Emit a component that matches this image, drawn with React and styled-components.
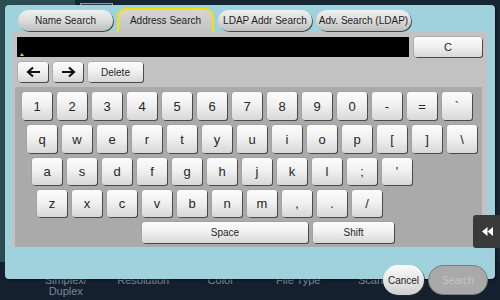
import React from "react";
import styled, { createGlobalStyle } from "styled-components";

const Global = createGlobalStyle`
  html, body { margin: 0; padding: 0; background: #14202e; }
  #root { width: 500px; height: 300px; }
  * { box-sizing: border-box; }
`;

const FONT = `"Liberation Sans", Arial, sans-serif`;

const Screen = styled.div`
  position: relative;
  width: 500px;
  height: 300px;
  overflow: hidden;
  background: #14202e;
  font-family: ${FONT};
`;

const Desktop = styled.div`
  display: grid;
  grid-template-rows: 262px 38px;
  height: 300px;
`;

const DesktopTop = styled.div`
  display: flex;
  align-items: flex-start;
  background: #172633;
`;

const TealBlock = styled.div`
  width: 75px;
  height: 100%;
  background: #2b4c52;
`;

const YellowBox = styled.div`
  margin: 3px 0 0 5px;
  width: 33px;
  height: 30px;
  border: 1px solid #b9a700;
  background: #24424a;
`;

const DeskFooter = styled.div`
  display: flex;
  padding: 13px 0 0 27px;
`;

const DeskLabel = styled.div`
  width: 77.5px;
  text-align: center;
  font-size: 11px;
  line-height: 11px;
  color: #7c8795;
`;

const Panel = styled.div`
  position: absolute;
  left: 5px;
  top: 5px;
  width: 490px;
  height: 274px;
  background: #9fd2dc;
  border-radius: 4px;
  box-shadow: 1px 1px 2px rgba(0, 0, 0, 0.6);
  display: flex;
  flex-direction: column;
  padding: 3px 8px 0 7px;
`;

const TabRow = styled.div`
  display: flex;
  align-items: flex-start;
  gap: 4px;
  height: 24px;
  padding-left: 6px;
`;

const Tab = styled.div`
  flex: none;
  width: ${(p) => p.$w}px;
  height: 21px;
  margin-top: 2px;
  border-radius: 11px;
  background: linear-gradient(#f0f0f0, #dcdcdc 50%, #bdbdbd);
  box-shadow: 1px 1px 0 #474747;
  display: flex;
  align-items: center;
  justify-content: center;
  font-size: 10px;
  color: #1e1e1e;
`;

const ActiveTab = styled.div`
  flex: none;
  width: ${(p) => p.$w}px;
  height: 24px;
  border: 2px solid #f3e300;
  border-bottom: none;
  border-radius: 9px 9px 0 0;
  background: linear-gradient(#d6d6d6, #c2c2c2);
  display: flex;
  align-items: center;
  justify-content: center;
  padding-bottom: 1px;
  font-size: 10px;
  color: #1e1e1e;
`;

const Console = styled.div`
  height: 215px;
  background: #c2c2c2;
  padding: 5px 5px 0 3px;
  display: flex;
  flex-direction: column;
  gap: 5px;
`;

const InputRow = styled.div`
  display: flex;
  gap: 5px;
  padding-left: 2px;
`;

const TextField = styled.div`
  position: relative;
  width: 393px;
  height: 20px;
  background: #000;
`;

const Caret = styled.div`
  position: absolute;
  left: 3px;
  bottom: 1px;
  width: 0;
  height: 0;
  border-left: 2.5px solid transparent;
  border-right: 2.5px solid transparent;
  border-bottom: 3px solid #f0d000;
`;

const EditRow = styled.div`
  display: flex;
  gap: 5px;
  padding-left: 3px;
`;

const Key = styled.div`
  flex: none;
  width: ${(p) => p.$w || 30}px;
  height: ${(p) => p.$h || 28}px;
  display: flex;
  align-items: center;
  justify-content: center;
  border-radius: 3px;
  background: linear-gradient(#fcfcfc, #f1f1f1 45%, #d8d8d8);
  box-shadow: 1px 1px 0 #4a4a4a, 0 0 0 0.5px #999;
  font-size: ${(p) => p.$fs || 13}px;
  color: #262626;
`;

const Keyboard = styled.div`
  flex: 1;
  background: #aaaaaa;
  padding: 5px 0 4px 7px;
  display: flex;
  flex-direction: column;
  gap: 5px;
`;

const KeyRow = styled.div`
  display: flex;
  gap: 5px;
  padding-left: ${(p) => p.$indent}px;
`;

const ButtonBar = styled.div`
  display: flex;
  justify-content: flex-end;
  gap: 4px;
  margin: 18px -1px 0 0;
`;

const CancelButton = styled.div`
  width: 41px;
  height: 30px;
  border-radius: 15px;
  background: linear-gradient(#fbfbfb, #e6e6e6 50%, #cfcfcf);
  box-shadow: 1px 1px 1px #2a2a2a;
  display: flex;
  align-items: center;
  justify-content: center;
  font-size: 10px;
  color: #1e1e1e;
`;

const SearchButton = styled.div`
  width: 60px;
  height: 30px;
  border-radius: 15px;
  background: #a9a9a9;
  border: 1px solid #7c7c7c;
  display: flex;
  align-items: center;
  justify-content: center;
  font-size: 10px;
  color: #c6c6c6;
`;

const SideTab = styled.div`
  position: absolute;
  right: 0;
  top: 215px;
  width: 27px;
  height: 33px;
  background: #3a3a3a;
  border-radius: 3px 0 0 3px;
  display: flex;
  align-items: center;
  justify-content: center;
  padding-left: 2px;
`;

const ArrowLeft = () => (
  <svg width="15" height="12" viewBox="0 0 15 12">
    <path d="M14 6H2.5M7 1.5L2 6l5 4.5" fill="none" stroke="#111" strokeWidth="2.2" />
  </svg>
);

const ArrowRight = () => (
  <svg width="15" height="12" viewBox="0 0 15 12">
    <path d="M1 6h11.5M8 1.5L13 6l-5 4.5" fill="none" stroke="#111" strokeWidth="2.2" />
  </svg>
);

const Rewind = () => (
  <svg width="11" height="9" viewBox="0 0 11 9">
    <path d="M5.5 0v9L0 4.5zM11 0v9L5.5 4.5z" fill="#fff" />
  </svg>
);

const rows = [
  { indent: 0, h: 28, keys: "1234567890-=`" },
  { indent: 5, h: 28, keys: "qwertyuiop[]\\" },
  { indent: 10, h: 27, keys: "asdfghjkl;'" },
  { indent: 15, h: 27, keys: "zxcvbnm,./" },
];

const labels = ["Simplex/\nDuplex", "Resolution", "Color", "File Type", "Scan S"];

export default function App() {
  return (
    <>
      <Global />
      <Screen>
        <Desktop>
          <DesktopTop>
            <TealBlock />
            <YellowBox />
          </DesktopTop>
          <DeskFooter>
            {labels.map((l) => (
              <DeskLabel key={l}>
                {l.split("\n").map((line) => (
                  <div key={line}>{line}</div>
                ))}
              </DeskLabel>
            ))}
          </DeskFooter>
        </Desktop>

        <Panel>
          <TabRow>
            <Tab $w={95}>Name Search</Tab>
            <ActiveTab $w={97}>Address Search</ActiveTab>
            <Tab $w={94}>LDAP Addr Search</Tab>
            <Tab $w={95}>Adv. Search (LDAP)</Tab>
          </TabRow>
          <Console>
            <InputRow>
              <TextField>
                <Caret />
              </TextField>
              <Key $w={68} $h={20} $fs={11}>C</Key>
            </InputRow>
            <EditRow>
              <Key $w={30} $h={20}><ArrowLeft /></Key>
              <Key $w={30} $h={20}><ArrowRight /></Key>
              <Key $w={55} $h={20} $fs={10}>Delete</Key>
            </EditRow>
            <Keyboard>
              {rows.map((r) => (
                <KeyRow key={r.keys} $indent={r.indent}>
                  {r.keys.split("").map((k) => (
                    <Key key={k} $h={r.h}>{k}</Key>
                  ))}
                </KeyRow>
              ))}
              <KeyRow $indent={120}>
                <Key $w={166} $h={21} $fs={10}>Space</Key>
                <Key $w={81} $h={21} $fs={10}>Shift</Key>
              </KeyRow>
            </Keyboard>
          </Console>
          <ButtonBar>
            <CancelButton>Cancel</CancelButton>
            <SearchButton>Search</SearchButton>
          </ButtonBar>
        </Panel>

        <SideTab>
          <Rewind />
        </SideTab>
      </Screen>
    </>
  );
}
